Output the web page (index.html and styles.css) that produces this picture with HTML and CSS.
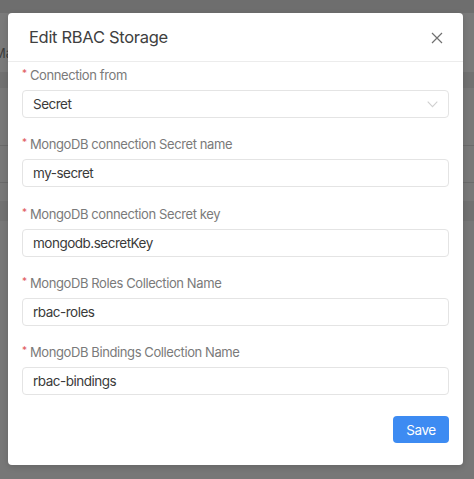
FILE: index.html
```html
<!DOCTYPE html>
<html>
<head>
<meta charset="utf-8">
<link rel="stylesheet" href="styles.css">
</head>
<body>
<div class="page">
  <div class="topbar"></div>
  <div class="pagehead"><span class="crumb">Ma</span></div>
  <div class="band1"></div>
  <div class="gap1"></div>
  <div class="rule"></div>
  <div class="gap2"></div>
  <div class="rule"></div>
  <div class="gap3"></div>
  <div class="band2"></div>
  <div class="rest"></div>
</div>

<div class="modal">
  <div class="modal-head">
    <span class="modal-title">Edit RBAC Storage</span>
    <svg class="close" width="12" height="12" viewBox="0 0 12 12"><path d="M1 1L11 11M11 1L1 11" stroke="#707070" stroke-width="1.2" fill="none"/></svg>
  </div>
  <div class="modal-body">
    <div class="field">
      <div class="label"><span class="req">*</span>Connection from</div>
      <div class="select">
        <span>Secret</span>
        <svg width="11" height="7" viewBox="0 0 11 7"><path d="M0.7 0.7L5.5 5.6L10.3 0.7" stroke="#d0d0d0" stroke-width="1.1" fill="none"/></svg>
      </div>
    </div>
    <div class="field">
      <div class="label"><span class="req">*</span>MongoDB connection Secret name</div>
      <div class="input">my-secret</div>
    </div>
    <div class="field">
      <div class="label"><span class="req">*</span>MongoDB connection Secret key</div>
      <div class="input">mongodb.secretKey</div>
    </div>
    <div class="field">
      <div class="label"><span class="req">*</span>MongoDB Roles Collection Name</div>
      <div class="input">rbac-roles</div>
    </div>
    <div class="field">
      <div class="label"><span class="req">*</span>MongoDB Bindings Collection Name</div>
      <div class="input">rbac-bindings</div>
    </div>
    <div class="actions">
      <button class="save">Save</button>
    </div>
  </div>
</div>
</body>
</html>
```

FILE: styles.css
```css
* { box-sizing: border-box; }
html, body { margin: 0; padding: 0; }
body {
  width: 474px;
  height: 479px;
  overflow: hidden;
  background: #777777;
  font-family: Inter, "Noto Sans", sans-serif;
  position: relative;
}
.page { display: flex; flex-direction: column; }
.topbar { height: 13px; background: #6e6e6e; }
.pagehead { height: 59px; background: #7a7a7a; display: flex; align-items: center; }
.crumb { font-size: 13px; color: #3c3c3c; margin-left: -6px; padding-top: 20px; }
.band1 { height: 16px; background: #717171; }
.gap1 { height: 57px; background: #787878; }
.rule { height: 1px; background: #6a6a6a; }
.gap2 { height: 36px; background: #787878; }
.gap3 { height: 18px; background: #787878; }
.band2 { height: 20px; background: #717171; }
.rest { flex: 1; height: 260px; background: #777777; }

.modal {
  position: absolute;
  left: 8px;
  top: 13px;
  width: 455px;
  height: 452px;
  background: #fff;
  border-radius: 4px;
  box-shadow: 0 2px 6px rgba(0,0,0,0.15);
  display: flex;
  flex-direction: column;
}
.modal-head {
  height: 49px;
  border-bottom: 1px solid #ececec;
  display: flex;
  align-items: center;
  justify-content: space-between;
  padding: 0 20px 0 21px;
}
.modal-title { font-size: 16.5px; color: #404040; letter-spacing: -0.3px; }
.close { margin-top: 1px; }
.modal-body { padding: 4px 14px 0 14px; display: flex; flex-direction: column; }
.field { display: flex; flex-direction: column; margin-bottom: 17.25px; }
.label { font-size: 13px; line-height: 18px; color: #7a7a7a; margin-bottom: 6px; display: flex; letter-spacing: -0.4px; }
.req { color: #e0585a; font-size: 10px; width: 8px; line-height: 14px; letter-spacing: 0; }
.select, .input {
  height: 28px;
  border: 1px solid #e4e4e4;
  border-radius: 4px;
  display: flex;
  align-items: center;
  padding: 0 10px 0 10px;
  font-size: 13.5px;
  letter-spacing: -0.5px;
  color: #3a3a3a;
}
.select { justify-content: space-between; }
.actions { display: flex; justify-content: flex-end; padding-top: 4px; }
.save {
  width: 56px;
  height: 27px;
  border: none;
  border-radius: 4px;
  background: #3d8bf2;
  color: #fff;
  font-family: Inter, "Noto Sans", sans-serif;
  font-size: 13.5px;
  letter-spacing: -0.4px;
  padding: 0;
}
```
